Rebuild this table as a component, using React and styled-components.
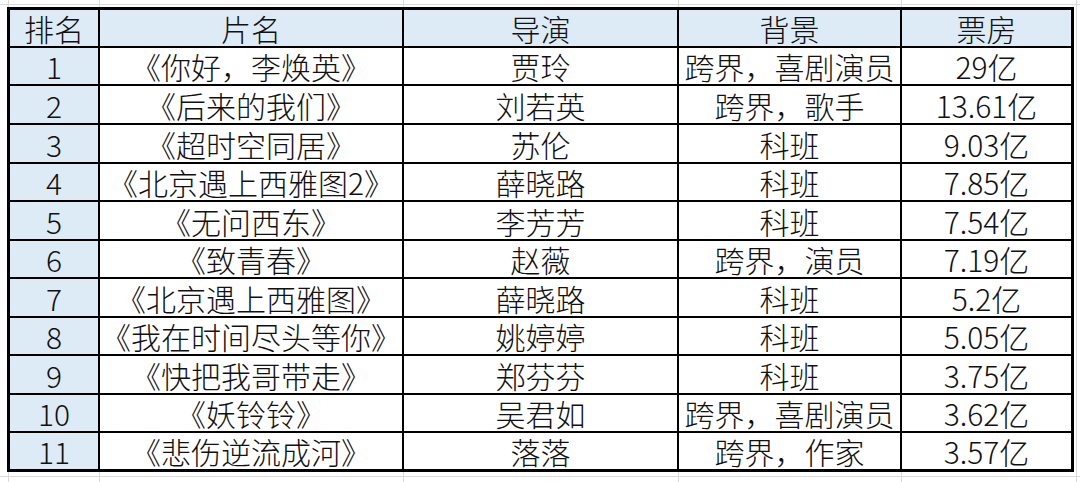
import React from 'react'
import styled, { createGlobalStyle } from 'styled-components'

const rows = [
  ['1', '《你好，李焕英》', '贾玲', '跨界，喜剧演员', '29亿'],
  ['2', '《后来的我们》', '刘若英', '跨界，歌手', '13.61亿'],
  ['3', '《超时空同居》', '苏伦', '科班', '9.03亿'],
  ['4', '《北京遇上西雅图2》', '薛晓路', '科班', '7.85亿'],
  ['5', '《无问西东》', '李芳芳', '科班', '7.54亿'],
  ['6', '《致青春》', '赵薇', '跨界，演员', '7.19亿'],
  ['7', '《北京遇上西雅图》', '薛晓路', '科班', '5.2亿'],
  ['8', '《我在时间尽头等你》', '姚婷婷', '科班', '5.05亿'],
  ['9', '《快把我哥带走》', '郑芬芬', '科班', '3.75亿'],
  ['10', '《妖铃铃》', '吴君如', '跨界，喜剧演员', '3.62亿'],
  ['11', '《悲伤逆流成河》', '落落', '跨界，作家', '3.57亿'],
]

const headers = ['排名', '片名', '导演', '背景', '票房']

const App = () => {
  return (
    <Page>
      <GlobalStyle />
      <Sheet>
        {headers.map((h) => (
          <Cell key={h} $tinted>{h}</Cell>
        ))}
        {rows.map((row) =>
          row.map((value, i) => (
            <Cell key={row[0] + '-' + i} $tinted={i === 0}>
              {value}
            </Cell>
          ))
        )}
      </Sheet>
    </Page>
  )
}

export default App

const GlobalStyle = createGlobalStyle`
  html, body {
    margin: 0;
    padding: 0;
    background: #ffffff;
  }
`

const gridLine = '#dadada'

const Page = styled.div`
  width: 1080px;
  height: 482px;
  box-sizing: border-box;
  padding: 7px 0 0 7px;
  background-color: #ffffff;
  background-image:
    linear-gradient(to right, ${gridLine} 1px, transparent 1px),
    linear-gradient(to right, ${gridLine} 1px, transparent 1px),
    linear-gradient(to right, ${gridLine} 1px, transparent 1px),
    linear-gradient(to right, ${gridLine} 1px, transparent 1px),
    linear-gradient(to right, ${gridLine} 1px, transparent 1px),
    linear-gradient(to right, ${gridLine} 1px, transparent 1px),
    linear-gradient(to bottom, ${gridLine} 1px, transparent 1px),
    linear-gradient(to bottom, ${gridLine} 1px, transparent 1px);
  background-repeat: no-repeat;
  background-size:
    1px 100%, 1px 100%, 1px 100%, 1px 100%, 1px 100%, 1px 100%,
    100% 1px, 100% 1px;
  background-position:
    8px 0, 99px 0, 403px 0, 678px 0, 901px 0, 1076px 0,
    0 4px, 0 476px;
  overflow: hidden;
`

const Sheet = styled.div`
  display: grid;
  grid-template-columns: 88px 302px 273px 221px 169px;
  grid-template-rows: 36px 36px 37px 37px 36px 37px 36px 37px 36px 37px 36px 36px;
  gap: 2px;
  width: max-content;
  background: #000000;
  border: 3px solid #000000;
`

const Cell = styled.div`
  display: flex;
  align-items: center;
  justify-content: center;
  background: ${(p) => (p.$tinted ? '#ddebf7' : '#ffffff')};
  color: #111111;
  font-family: "Noto Sans CJK SC", "Noto Sans", sans-serif;
  font-size: 30px;
  font-weight: 300;
  line-height: 1;
  white-space: nowrap;
`
